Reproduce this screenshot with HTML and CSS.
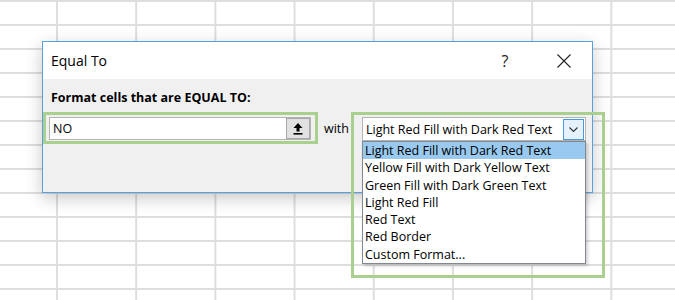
FILE: index.html
```html
<!DOCTYPE html>
<html lang="en">
<head>
  <meta charset="UTF-8">
  <title>Equal To</title>
  <link rel="stylesheet" href="styles.css">
</head>
<body>
  <div class="sheet">
    <div class="dialog">
      <div class="titlebar">
        <span class="title">Equal To</span>
        <span class="tb-btn help">?</span>
        <span class="tb-btn close">
          <svg width="14" height="14" viewBox="0 0 14 14"><path d="M0.5 0.5 L13.5 13.5 M13.5 0.5 L0.5 13.5" stroke="#222" stroke-width="1.1" fill="none"/></svg>
        </span>
      </div>
      <div class="dlg-body">
        <div class="prompt">Format cells that are EQUAL TO:</div>
        <div class="row">
          <div class="hl hl-input">
            <div class="ref-input">
              <span class="value">NO</span>
              <span class="collapse-btn">
                <svg width="10" height="12" viewBox="0 0 10 12"><polygon points="5,0 9.5,5 6.5,5 6.5,8.5 3.5,8.5 3.5,5 0.5,5" fill="#000"/><rect x="0.5" y="10" width="9" height="1.6" fill="#000"/></svg>
              </span>
            </div>
          </div>
          <span class="with">with</span>
          <div class="hl hl-format">
            <div class="combo">
              <span class="combo-text">Light Red Fill with Dark Red Text</span>
              <span class="drop-btn">
                <svg width="9" height="5" viewBox="0 0 9 5"><path d="M0.5 0.5 L4.5 4.5 L8.5 0.5" stroke="#333" stroke-width="1.1" fill="none"/></svg>
              </span>
            </div>
            <ul class="options">
              <li class="selected">Light Red Fill with Dark Red Text</li>
              <li>Yellow Fill with Dark Yellow Text</li>
              <li>Green Fill with Dark Green Text</li>
              <li>Light Red Fill</li>
              <li>Red Text</li>
              <li>Red Border</li>
              <li>Custom Format...</li>
            </ul>
          </div>
        </div>
      </div>
    </div>
  </div>
</body>
</html>
```

FILE: styles.css
```css
body { margin: 0; font-family: "Open Sans", "Noto Sans", sans-serif; color: #000; }
.sheet {
  position: relative; width: 675px; height: 300px; overflow: hidden; background-color: #fff;
  background-image: linear-gradient(to right, #dedede 2px, transparent 2px), linear-gradient(to bottom, #dedede 2px, transparent 2px);
  background-size: 79.2px 24px, 79.2px 24px;
  background-position: 56px 0, 0 0;
}

.dialog {
  position: absolute; left: 42px; top: 41px; width: 549px; height: 150px;
  border: 1px solid #5a9fe0; background: #f0f0f0;
  box-shadow: 0 5px 16px rgba(0, 0, 0, 0.22);
}
.titlebar { display: flex; align-items: center; height: 37px; background: #fff; }
.title { flex: 1; padding-left: 8px; font-size: 14px; }
.tb-btn { display: flex; align-items: center; justify-content: center; width: 46px; height: 37px; }
.help { margin-right: 13px; font-size: 16px; color: #222; }
.close { margin-right: 5px; }

.dlg-body { padding-top: 10px; }
.prompt { padding-left: 8px; font-size: 12.5px; font-weight: bold; line-height: 17px; margin-bottom: 6px; }
.row { display: flex; align-items: flex-start; }

.hl { border: 3px solid #a9d08e; }
.hl-input { padding: 2px 4px 1px 3px; }
.hl-format { margin-left: 2px; padding: 2px 16px 11px 8px; }

.ref-input {
  display: flex; align-items: center; width: 260px; height: 21px;
  background: #fff; border: 1px solid #b4b4b4;
}
.value { flex: 1; padding-left: 3px; font-size: 12.5px; }
.collapse-btn {
  display: flex; align-items: center; justify-content: center;
  width: 22px; height: 19px; background: #e1e1e1; border: 1px solid #a8a8a8;
}

.with { margin: 8px 0 0 6px; font-size: 12.5px; line-height: 17px; }

.combo {
  display: flex; align-items: center; width: 222px; height: 22px;
  background: #fff; border: 1px solid #b4b4b4;
}
.combo-text { flex: 1; padding-left: 3px; font-size: 12.5px; }
.drop-btn {
  display: flex; align-items: center; justify-content: center;
  width: 19px; height: 19px; margin-right: 1px;
  background: #e5f1fb; border: 1px solid #4a98de;
}

.options {
  list-style: none; margin: 0; padding: 0; width: 222px;
  background: #fff; border: 1px solid #828790;
  box-shadow: 2px 2px 3px rgba(0, 0, 0, 0.18);
}
.options li { height: 17.3px; line-height: 17.3px; padding-left: 2px; font-size: 12.5px; white-space: nowrap; }
.options li.selected { background: #99c9ef; }
```
